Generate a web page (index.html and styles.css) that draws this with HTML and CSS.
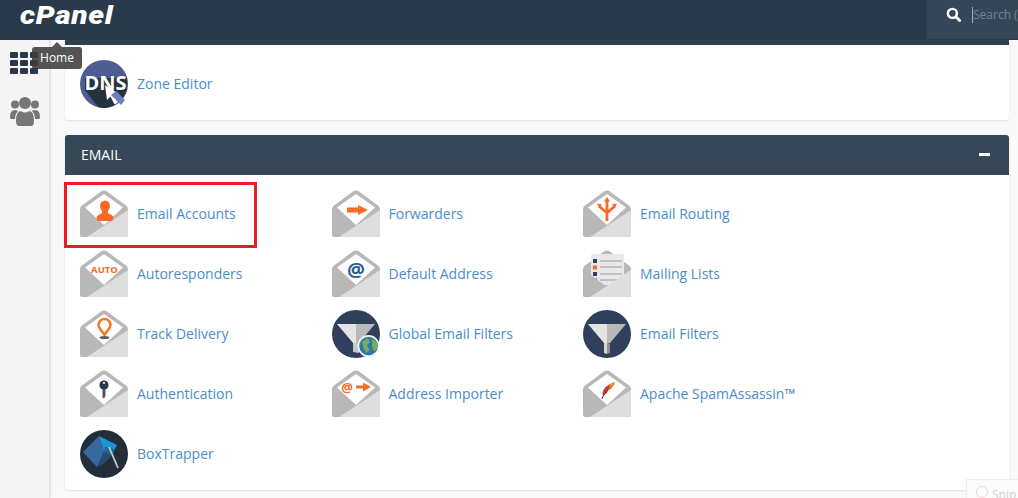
FILE: index.html
```html
<!DOCTYPE html>
<html lang="en">
<head>
<meta charset="utf-8">
<title>cPanel - Email</title>
<link rel="stylesheet" href="styles.css">
</head>
<body>
<svg class="defs" width="0" height="0" aria-hidden="true">
  <symbol id="env" viewBox="0 0 48 48">
    <path d="M0 19q0-2 2-3.500L21 1.500q3-2 6 0l19 14q2 1.500 2 3.500V45q0 2-2 2H2q-2 0-2-2z" fill="#b8b8b8"/>
    <path d="M5 17.500L24 4l19 13.500L24 35z" fill="#fff"/>
    <path d="M7 47L48 20V45q0 2-2 2z" fill="#dedede"/>
  </symbol>
  <symbol id="funnel" viewBox="0 0 48 48">
    <circle cx="24" cy="24" r="24" fill="#2f3f5c"/>
    <path d="M5 14h19v20l-3-1z" fill="#e4e4e4"/>
    <path d="M24 14h19L27 33l-3 1z" fill="#b9b9b9"/>
    <path d="M21 33h3v11l-3-1z" fill="#d6d6d6"/>
    <path d="M24 34h3v9l-3 1z" fill="#8f8f8f"/>
  </symbol>
</svg>

<header class="topbar">
  <div class="logo">cPanel</div>
  <div class="search">
    <svg class="search-icon" viewBox="0 0 16 16"><circle cx="6.800" cy="6.800" r="4.800" fill="none" stroke="#fff" stroke-width="2.600"/><path d="M10.500 10.500L14.500 14.500" stroke="#fff" stroke-width="3" stroke-linecap="round"/></svg>
    <span class="caret"></span>
    <span class="search-text">Search (</span>
  </div>
</header>

<div class="shell">
  <nav class="sidebar">
    <svg class="nav-grid" viewBox="0 0 28 22" fill="#2b3a4a">
      <rect x="0" y="0" width="8" height="6" rx="1"/><rect x="10" y="0" width="8" height="6" rx="1"/><rect x="20" y="0" width="8" height="6" rx="1"/>
      <rect x="0" y="8" width="8" height="6" rx="1"/><rect x="10" y="8" width="8" height="6" rx="1"/><rect x="20" y="8" width="8" height="6" rx="1"/>
      <rect x="0" y="16" width="8" height="6" rx="1"/><rect x="10" y="16" width="8" height="6" rx="1"/><rect x="20" y="16" width="8" height="6" rx="1"/>
    </svg>
    <svg class="nav-users" viewBox="0 0 30 29" fill="#777">
      <circle cx="15" cy="6" r="6"/><circle cx="5" cy="7.500" r="4"/><circle cx="25" cy="7.500" r="4"/>
      <path d="M0 20q0-7 5-7 2 0 3 1-3 3-3 7v1H1q-1 0-1-2zM30 20q0-7-5-7-2 0-3 1 3 3 3 7v1h4q1 0 1-2z"/>
      <path d="M6 24q0-10 5-10 4 3 8 0 5 0 5 10 0 5-3 5H9q-3 0-3-5z"/>
    </svg>
  </nav>
  <div class="tooltip">Home</div>

  <main class="main">
    <section class="card card-first">
      <div class="strip"></div>
      <div class="single">
        <a class="item">
          <svg class="ico" viewBox="0 0 48 48">
            <circle cx="24" cy="24" r="24" fill="#4f5b93"/>
            <path d="M5 18H46.500A24 24 0 0 1 24 48Q21 48 18 47L5 30z" fill="#25333f"/>
            <text x="25.500" y="30" class="dns">DNS</text>
            <path d="M25 25l2 15 3.500-3.500 4 8 3.500-2-4-7.500 5-1z" fill="#fff"/>
            <path d="M31 35l5-4 9 9-4 5z" fill="#6f7fbd"/>
          </svg>
          <span>Zone Editor</span>
        </a>
      </div>
    </section>

    <section class="card card-email">
      <header class="card-head">
        <h2>EMAIL</h2>
        <span class="minus"></span>
      </header>
      <div class="grid">
        <a class="item">
          <svg class="ico" viewBox="0 0 48 48"><use href="#env"/>
            <ellipse cx="25" cy="16" rx="5" ry="5.500" fill="#f96a26"/>
            <path d="M22 20h6v3l5 3q1 4-1 5H18q-2-1-1-5l5-3z" fill="#f96a26"/>
          </svg>
          <span>Email Accounts</span>
        </a>
        <a class="item">
          <svg class="ico" viewBox="0 0 48 48"><use href="#env"/>
            <path d="M15 17.500h11V15l10 5-10 5v-2.500H15z" fill="#f96a26"/>
          </svg>
          <span>Forwarders</span>
        </a>
        <a class="item">
          <svg class="ico" viewBox="0 0 48 48"><use href="#env"/>
            <path d="M24 10v21M24 23l-8-7M24 23l8-7" stroke="#f96a26" stroke-width="2.800" fill="none"/>
            <path d="M24 7l3 4.500h-6zM14 13.500l5 .8-2.800 3.500zM34 13.500l-5 .8 2.800 3.500z" fill="#f96a26"/>
          </svg>
          <span>Email Routing</span>
        </a>

        <a class="item">
          <svg class="ico" viewBox="0 0 48 48"><use href="#env"/>
            <text x="24.500" y="22.500" class="auto">AUTO</text>
          </svg>
          <span>Autoresponders</span>
        </a>
        <a class="item">
          <svg class="ico" viewBox="0 0 48 48"><use href="#env"/>
            <text x="24" y="27" class="at at-blue">@</text>
          </svg>
          <span>Default Address</span>
        </a>
        <a class="item">
          <svg class="ico" viewBox="0 0 48 48">
            <path d="M0 19q0-2 2-3.500L21 1.500q3-2 6 0l19 14q2 1.500 2 3.500V45q0 2-2 2H2q-2 0-2-2z" fill="#b8b8b8"/>
            <rect x="8" y="4" width="33" height="31" rx="2" fill="#e8e8e8"/>
            <rect x="10" y="9" width="4" height="4" fill="#2f3f5c"/><rect x="10" y="15.500" width="4" height="4" fill="#f96a26"/><rect x="10" y="22" width="4" height="4" fill="#2f3f5c"/><rect x="10" y="28" width="4" height="4" fill="#f96a26"/>
            <path d="M17 11h22M17 17h22M17 24h22M17 30h20" stroke="#b5b5b5" stroke-width="1.500"/>
            <path d="M0 19L24 37 48 20V45q0 2-2 2H2q-2 0-2-2z" fill="#b8b8b8"/>
            <path d="M7 47L48 20V45q0 2-2 2z" fill="#dedede"/>
          </svg>
          <span>Mailing Lists</span>
        </a>

        <a class="item">
          <svg class="ico" viewBox="0 0 48 48"><use href="#env"/>
            <path d="M24.500 25c-2.500-4.500-6-6.500-6-10a6 6 0 0 1 12 0c0 3.500-3.500 5.500-6 10z" fill="none" stroke="#f9761e" stroke-width="2.500"/>
            <ellipse cx="24.500" cy="27.500" rx="5" ry="1.600" fill="#5a5a5a"/>
          </svg>
          <span>Track Delivery</span>
        </a>
        <a class="item">
          <svg class="ico" viewBox="0 0 48 48">
            <circle cx="24" cy="24" r="24" fill="#2f3f5c"/>
            <path d="M5 14h19v20l-3-1z" fill="#e4e4e4"/>
            <path d="M24 14h19L27 33l-3 1z" fill="#b9b9b9"/>
            <path d="M21 33h6v10l-6-1z" fill="#c6c6c6"/>
            <circle cx="36.500" cy="36" r="11" fill="#f4f4f4"/>
            <circle cx="36.500" cy="36" r="9.300" fill="#2f78a8"/>
            <path d="M30 32l6-4 2 4-3 3 2.500 5-3 3-3-5zM40 29l5.500 4 .3 5-3.800 3.500-2-6z" fill="#7dab5e"/>
          </svg>
          <span>Global Email Filters</span>
        </a>
        <a class="item">
          <svg class="ico" viewBox="0 0 48 48"><use href="#funnel"/></svg>
          <span>Email Filters</span>
        </a>

        <a class="item">
          <svg class="ico" viewBox="0 0 48 48"><use href="#env"/>
            <circle cx="24" cy="15" r="4.600" fill="#2b3a4a"/>
            <circle cx="24" cy="13" r="1.100" fill="#fff"/>
            <path d="M22.500 19h3v7l-1.500 2.500-1.500-1z" fill="#555"/>
          </svg>
          <span>Authentication</span>
        </a>
        <a class="item">
          <svg class="ico" viewBox="0 0 48 48"><use href="#env"/>
            <text x="15" y="22" class="at at-orange">@</text>
            <path d="M24 15.500h7v-3l8 4.500-8 4.500v-3h-7z" fill="#f96a26"/>
          </svg>
          <span>Address Importer</span>
        </a>
        <a class="item">
          <svg class="ico" viewBox="0 0 48 48"><use href="#env"/>
            <path d="M20 26c-2-5 3-10 7-12-1 5-3 10-7 12z" fill="#c0392b"/>
            <path d="M27 14c1-.8 3-1.600 5-2-.5 2.500-2 5-6 9z" fill="#f08a24"/>
            <path d="M20 26c3-3 5-6 7.500-10" stroke="#8e2b22" stroke-width=".8" fill="none"/>
            <path d="M20 26l-1 3" stroke="#7a2a20" stroke-width="1"/>
          </svg>
          <span>Apache SpamAssassin™</span>
        </a>

        <a class="item">
          <svg class="ico" viewBox="0 0 48 48">
            <circle cx="24" cy="24" r="24" fill="#222f3a"/>
            <path d="M19 6l18 9-5 10-8-3z" fill="#1a95d8"/>
            <path d="M3 22L19 6l5 16-7 15z" fill="#35699f"/>
            <path d="M24 22l8 3-7 8-8 4z" fill="#2b4a72"/>
            <path d="M24 22l8 3 3-6-10-2z" fill="#17689c"/>
            <path d="M29 17l9 21" stroke="#c9c9c9" stroke-width="1.800" fill="none"/>
          </svg>
          <span>BoxTrapper</span>
        </a>
      </div>
      <div class="highlight"></div>
    </section>
  </main>
</div>

<div class="snip"><span class="snip-mark"></span><span>Snip</span></div>
</body>
</html>
```

FILE: styles.css
```css
* { box-sizing: border-box; }
html, body { margin: 0; padding: 0; }
body {
  position: relative;
  width: 1018px;
  height: 498px;
  overflow: hidden;
  background: #f9f9f9;
  font-family: "Open Sans", "Liberation Sans", sans-serif;
  font-size: 14px;
  color: #333;
}
.defs { position: absolute; }

.topbar {
  height: 40px;
  background: #2a3a4a;
  display: flex;
  justify-content: space-between;
  align-items: flex-start;
}
.logo {
  margin: 0 0 0 20px;
  font-family: "Roboto", "Liberation Sans", sans-serif;
  font-style: italic;
  font-weight: 900;
  font-size: 26px;
  line-height: 31px;
  letter-spacing: .6px;
  color: #fff;
  transform: scaleX(1.15);
  transform-origin: left center;
}
.search {
  width: 92px;
  height: 39px;
  background: #344658;
  border-left: 1px solid #2f3f50;
  display: flex;
  align-items: center;
  padding: 0 0 10px 19px;
}
.search-icon { width: 15px; height: 15px; flex: none; }
.caret { width: 1px; height: 16px; background: #aab; margin-left: 11px; flex: none; }
.search-text {
  font-size: 12px;
  color: #76838f;
  white-space: nowrap;
}

.shell { display: flex; height: 458px; }
.sidebar {
  width: 50px;
  flex: none;
  background: #f5f5f5;
  border-right: 1px solid #e2e2e2;
  box-shadow: 1px 0 2px rgba(0, 0, 0, .08);
  display: flex;
  flex-direction: column;
  align-items: flex-start;
  padding: 12px 0 0 10px;
}
.nav-grid { width: 28px; height: 22px; }
.nav-users { width: 30px; height: 29px; margin-top: 23px; }

.tooltip {
  position: absolute;
  left: 32px;
  top: 47px;
  width: 50px;
  height: 22px;
  border-radius: 3px;
  background: rgba(60, 60, 60, .88);
  color: #fff;
  font-size: 12px;
  line-height: 22px;
  text-align: center;
}
.tooltip::before {
  content: "";
  position: absolute;
  left: 20px;
  top: -5px;
  border-left: 5px solid transparent;
  border-right: 5px solid transparent;
  border-bottom: 5px solid rgba(60, 60, 60, .88);
}

.main { flex: 1; padding: 0 9px 0 15px; }
.card {
  background: #fff;
  border-radius: 3px;
  box-shadow: 0 1px 2px rgba(0, 0, 0, .1);
}
.card-first { height: 80px; }
.strip { height: 5px; background: #2f3f50; }
.single { padding: 15px 15px 0; }

.card-email {
  position: relative;
  margin-top: 15px;
  height: 355px;
}
.card-head {
  height: 40px;
  background: #364758;
  display: flex;
  align-items: center;
  justify-content: space-between;
  padding: 0 19px 2px 16px;
  border-radius: 3px 3px 0 0;
}
.card-head h2 {
  margin: 0;
  font-size: 14px;
  font-weight: 400;
  color: #fff;
}
.minus { width: 11px; height: 3px; background: #fff; }

.grid {
  display: grid;
  grid-template-columns: 251.500px 251.500px 1fr;
  grid-auto-rows: 60px;
  padding: 15px 15px 0;
}
.item {
  display: flex;
  align-items: flex-start;
  gap: 9px;
  height: 48px;
  color: #4a8dcd;
  font-size: 14px;
  line-height: 48px;
  white-space: nowrap;
}
.ico { width: 48px; height: 48px; flex: none; display: block; }

.dns {
  font-family: "Open Sans", sans-serif;
  font-weight: 700;
  font-size: 20px;
  fill: #fff;
  text-anchor: middle;
}
.auto {
  font-family: "Open Sans", sans-serif;
  font-weight: 700;
  font-size: 9.500px;
  fill: #f96a26;
  text-anchor: middle;
}
.at { font-family: "Open Sans", sans-serif; font-weight: 700; text-anchor: middle; }
.at-blue { font-size: 20px; fill: #2b5f92; }
.at-orange { font-size: 13px; fill: #f96a26; }

.highlight {
  position: absolute;
  left: -1px;
  top: 47px;
  width: 193px;
  height: 66px;
  border: 3px solid #ed1c24;
}

.snip {
  position: absolute;
  left: 966px;
  top: 479px;
  width: 60px;
  height: 30px;
  background: #fbfbfb;
  border: 1px solid #e6f0ee;
  display: flex;
  gap: 4px;
  padding: 6px 0 0 9px;
  font-size: 12px;
  color: #d2d2d2;
}
.snip-mark {
  width: 12px;
  height: 12px;
  border-radius: 50%;
  border: 1px solid #f0d6d6;
  flex: none;
}
```
